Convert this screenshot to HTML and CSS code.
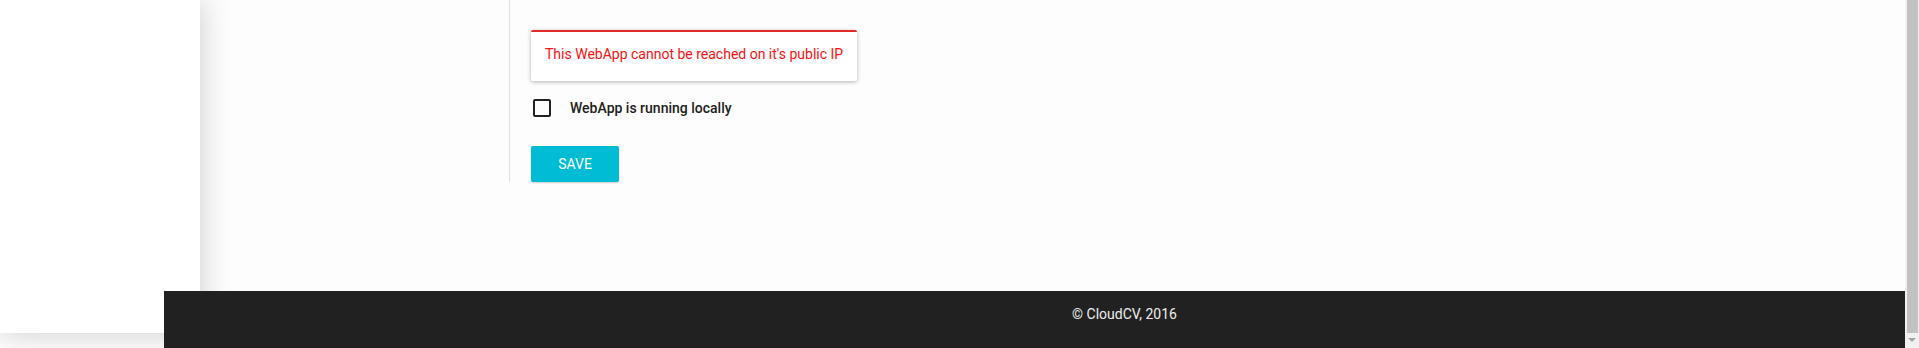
FILE: index.html
```html
<!DOCTYPE html>
<html>
<head>
<meta charset="utf-8">
<link rel="stylesheet" href="styles.css">
</head>
<body>
<aside class="sidebar"></aside>
<main class="main">
  <section class="panel">
    <div class="alert">This WebApp cannot be reached on it's public IP</div>
    <label class="check-row">
      <span class="checkbox"></span>
      <span class="check-label">WebApp is running locally</span>
    </label>
    <button class="save-btn">Save</button>
  </section>
</main>
<footer class="footer">© CloudCV, 2016</footer>
<div class="scrollbar">
  <div class="scroll-thumb"></div>
  <div class="scroll-arrow"></div>
</div>
</body>
</html>
```

FILE: styles.css
```css
html, body {
  margin: 0;
  padding: 0;
  height: 100%;
  overflow: hidden;
}
body {
  background: #fdfdfd;
  font-family: Roboto, "Liberation Sans", Arial, sans-serif;
  position: relative;
}
.sidebar {
  position: absolute;
  left: 0;
  top: 0;
  width: 200px;
  height: 333px;
  background: #fff;
  box-shadow: 0 0 30px rgba(0, 0, 0, 0.2);
  z-index: 1;
}
.main {
  padding-left: 509px;
}
.panel {
  border-left: 1px solid #e0e0e0;
  padding-left: 21px;
  padding-top: 30px;
  width: 400px;
  display: flex;
  flex-direction: column;
  align-items: flex-start;
}
.alert {
  box-sizing: border-box;
  width: 326px;
  height: 51px;
  background: #fff;
  border-top: 2px solid #e02a2a;
  border-radius: 2px;
  box-shadow: 0 1px 4px rgba(0, 0, 0, 0.3);
  color: #ff1010;
  font-size: 14px;
  line-height: 20px;
  padding: 12px 14px 0 14px;
  white-space: nowrap;
}
.check-row {
  display: flex;
  align-items: center;
  margin-top: 18px;
  margin-left: 2px;
  height: 18px;
}
.checkbox {
  box-sizing: border-box;
  width: 18px;
  height: 18px;
  border: 2px solid #222;
  border-radius: 2px;
}
.check-label {
  margin-left: 19px;
  font-size: 14px;
  font-weight: 500;
  color: #212121;
}
.save-btn {
  margin-top: 29px;
  width: 88px;
  height: 36px;
  border: none;
  border-radius: 2px;
  background: #00bcd4;
  color: #fff;
  font-family: Roboto, "Liberation Sans", Arial, sans-serif;
  font-size: 14px;
  text-transform: uppercase;
  box-shadow: 0 1px 2px rgba(0, 0, 0, 0.2);
  padding: 0;
}
.footer {
  position: absolute;
  left: 164px;
  right: 14px;
  top: 291px;
  bottom: 0;
  background: #212121;
  color: #eeeeee;
  font-size: 14px;
  line-height: 20px;
  padding-top: 13px;
  padding-left: 180px;
  text-align: center;
  z-index: 2;
}
.scrollbar {
  position: absolute;
  right: 0;
  top: 0;
  bottom: 0;
  width: 14px;
  background: #f1f1f1;
  z-index: 3;
}
.scroll-thumb {
  position: absolute;
  left: 2px;
  top: 0;
  width: 11px;
  height: 333px;
  background: #c1c1c1;
}
.scroll-arrow {
  position: absolute;
  left: 3px;
  top: 338px;
  width: 0;
  height: 0;
  border-left: 4px solid transparent;
  border-right: 4px solid transparent;
  border-top: 4px solid #a3a3a3;
}
```
